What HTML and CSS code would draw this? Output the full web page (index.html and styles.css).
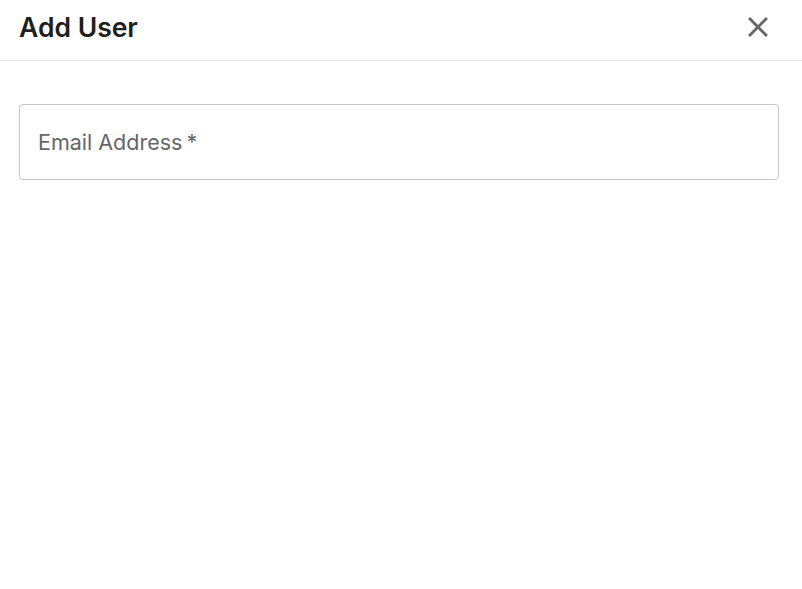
FILE: index.html
```html
<!DOCTYPE html>
<html lang="en">
<head>
  <meta charset="UTF-8" />
  <meta name="viewport" content="width=device-width, initial-scale=1.0"/>
  <title>Add User</title>
  <link rel="stylesheet" href="styles.css">
</head>
<body>
  <div class="dialog">
    <div class="dialog-header">
      <h2 class="dialog-title">Add User</h2>
      <button class="close-btn" aria-label="Close">
        <svg width="34" height="34" viewBox="0 0 24 24"><path d="M19 6.41 17.59 5 12 10.59 6.41 5 5 6.41 10.59 12 5 17.59 6.41 19 12 13.41 17.59 19 19 17.59 13.41 12z" fill="currentColor"/></svg>
      </button>
    </div>
    <div class="dialog-body">
      <div class="field">
        <label class="field-label" for="email">Email Address<span class="req">*</span></label>
        <input id="email" class="field-input" type="email">
      </div>
    </div>
  </div>
</body>
</html>
```

FILE: styles.css
```css
body {
  margin: 0;
  background-color: #fff;
  font-family: Inter, 'Noto Sans', sans-serif;
  color: #1f1f1f;
}

.dialog {
  width: 802px;
  height: 589px;
}

.dialog-header {
  display: flex;
  align-items: center;
  justify-content: space-between;
  height: 60px;
  padding: 0 23px 0 19px;
  border-bottom: 1px solid #e3e3e3;
}

.dialog-title {
  margin: 0 0 6px;
  font-size: 26.5px;
  font-weight: 600;
  color: #1f1f1f;
}

.close-btn {
  display: flex;
  border: none;
  background: none;
  padding: 0;
  color: #666;
  cursor: pointer;
  margin-right: 4px;
  margin-bottom: 6px;
}

.dialog-body {
  padding: 43px 23px 0 19px;
}

.field {
  position: relative;
}

.field-label {
  position: absolute;
  left: 19px;
  top: 50%;
  transform: translateY(-51%);
  font-size: 21.5px;
  color: #666;
  pointer-events: none;
}

.field-label .req {
  margin-left: 4px;
}

.field-input {
  display: block;
  box-sizing: border-box;
  width: 100%;
  height: 76px;
  border: 1px solid #c4c4c4;
  border-radius: 4px;
  outline: none;
}
```
